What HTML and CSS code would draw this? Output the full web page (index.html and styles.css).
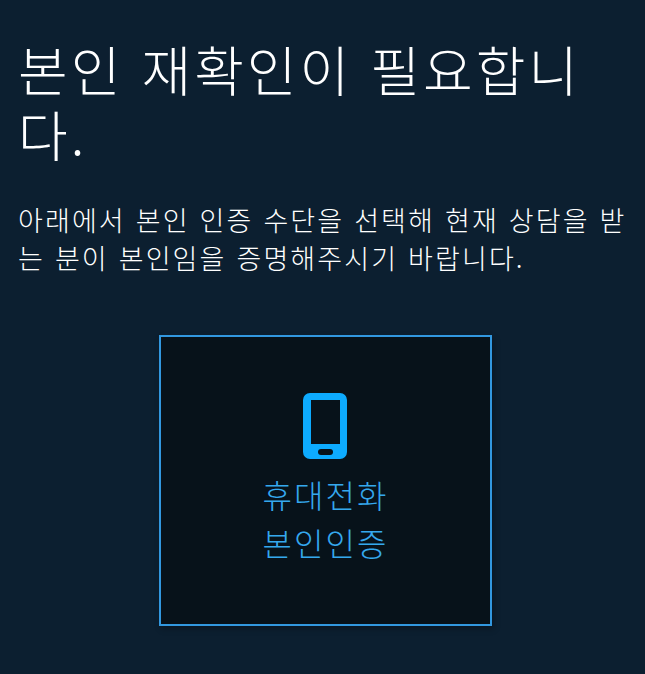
FILE: index.html
```html
<!DOCTYPE html>
<html lang="ko">
<head>
<meta charset="utf-8">
<title>본인 재확인</title>
<link rel="stylesheet" href="styles.css">
</head>
<body>
<main class="page">
  <h1 class="title">본인 재확인이 필요합니다.</h1>
  <p class="desc">아래에서 본인 인증 수단을 선택해 현재 상담을 받는 분이 본인임을 증명해주시기 바랍니다.</p>
  <div class="options">
    <button class="card" type="button">
      <svg class="icon" viewBox="0 0 44 66" width="44" height="66" aria-hidden="true">
        <path fill-rule="evenodd" fill="#0dabff" d="M7 0H37A7 7 0 0 1 44 7V59A7 7 0 0 1 37 66H7A7 7 0 0 1 0 59V7A7 7 0 0 1 7 0ZM8 7V51H37V7Z"/>
        <rect x="15" y="56" width="15" height="6" rx="3" fill="#07121a"/>
      </svg>
      <span class="label">휴대전화<br>본인인증</span>
    </button>
  </div>
</main>
</body>
</html>
```
FILE: styles.css
```css
html, body { margin: 0; height: 100%; }
body { background: #0c1f30; color: #fff; font-family: "Noto Sans CJK KR", "Noto Sans", sans-serif; }
.page { padding: 36px 18px 0; box-sizing: border-box; height: 674px; overflow: hidden; }
.title { margin: 0; font-size: 54px; font-weight: 300; line-height: 65px; letter-spacing: 3px; }
.desc { margin: 35px 0 0; font-size: 27px; font-weight: 300; line-height: 38px; letter-spacing: 2.1px; word-spacing: 0.3px; }
.options { display: flex; justify-content: center; margin-top: 58px; padding-left: 6px; }
.card { width: 333px; height: 291px; box-sizing: border-box; border: 2px solid #3298e0; background: #07121a; display: flex; flex-direction: column; align-items: center; padding: 56px 0 0; font: inherit; color: #35a8ee; box-shadow: 2px 3px 6px rgba(0,0,0,.25); }
.icon { margin-right: 2px; }
.label { font-size: 32px; font-weight: 300; line-height: 48px; letter-spacing: 2px; margin-top: 11px; }
```
